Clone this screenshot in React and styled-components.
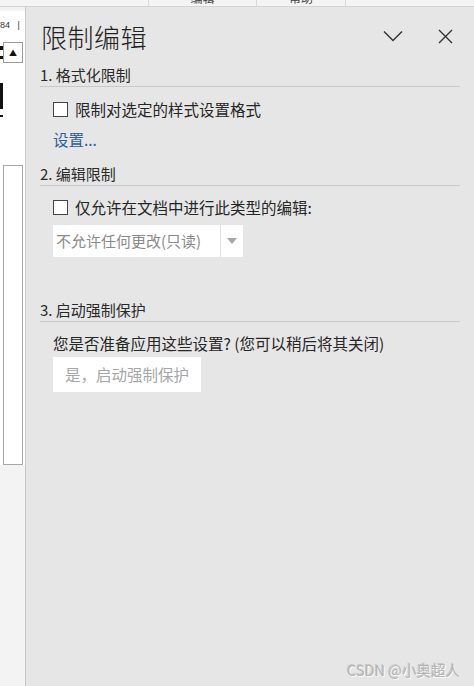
import React from 'react';
import styled, { createGlobalStyle } from 'styled-components';

const GlobalStyle = createGlobalStyle`
  html, body { margin: 0; padding: 0; }
  body {
    background: #e6e6e6;
    font-family: "Noto Sans CJK SC", "Noto Sans", sans-serif;
    color: #262626;
  }
`;

const Page = styled.div`
  position: relative;
  width: 474px;
  height: 686px;
  overflow: hidden;
  display: flex;
  flex-direction: column;
  background: #e6e6e6;
`;

const TopBar = styled.div`
  height: 6px;
  flex: none;
  display: flex;
  overflow: hidden;
  background: #f4f4f4;
  border-bottom: 1px solid #d4d4d4;
`;

const TopTab = styled.div`
  width: ${p => p.w}px;
  flex: none;
  border-right: 1px solid #d8d8d8;
  font-size: 12px;
  line-height: 12px;
  color: #444;
  text-align: center;
  margin-top: -8px;
`;

const Body = styled.div`
  flex: 1;
  display: flex;
  min-height: 0;
`;

const LeftStrip = styled.div`
  width: 25px;
  flex: none;
  display: flex;
  flex-direction: column;
  background: #f3f3f3;
  border-right: 1px solid #c8c8c8;
`;

const Ruler = styled.div`
  height: 31px;
  margin-top: 4px;
  background: #fff;
  font-family: "Liberation Sans", sans-serif;
  font-size: 9px;
  color: #333;
  padding: 9px 0 0 0;
  box-sizing: border-box;
  white-space: nowrap;
  overflow: hidden;
`;

const ScrollRow = styled.div`
  display: flex;
  flex: ${p => (p.grow ? 1 : 'none')};
  height: ${p => (p.h ? `${p.h}px` : 'auto')};
  background: ${p => p.bg || '#fff'};
`;

const DocEdge = styled.div`
  width: 3px;
  flex: none;
  display: flex;
  flex-direction: column;
  gap: 6px;
  padding-top: ${p => p.top || 0}px;
`;

const Mark = styled.div`
  width: 3px;
  height: ${p => p.h}px;
  background: #111;
`;

const ScrollBtn = styled.div`
  width: 20px;
  height: 21px;
  box-sizing: border-box;
  border: 1px solid #9a9a9a;
  background: #fff;
  display: flex;
  align-items: center;
  justify-content: center;
  font-size: 8px;
  color: #111;
`;

const Thumb = styled.div`
  width: 20px;
  height: 300px;
  box-sizing: border-box;
  border: 1px solid #a8a8a8;
  background: #fff;
`;

const Panel = styled.div`
  flex: 1;
  padding: 0 14px;
  display: flex;
  flex-direction: column;
`;

const Header = styled.div`
  height: 58px;
  display: flex;
  align-items: center;
`;

const Title = styled.div`
  flex: 1;
  font-size: 26px;
  font-weight: 300;
  padding-left: 1px;
  color: #222;
  letter-spacing: 0.5px;
`;

const IconBtn = styled.div`
  width: 30px;
  height: 30px;
  display: flex;
  align-items: center;
  justify-content: center;
  margin-left: ${p => p.ml || 0}px;
`;

const SectionHeading = styled.div`
  margin-top: ${p => p.mt}px;
  font-size: 15px;
  line-height: 20px;
  padding-bottom: 1px;
  border-bottom: 1px solid #c9c9c9;
  color: #2a2a2a;
`;

const Indent = styled.div`
  margin-left: 13px;
  margin-top: ${p => p.mt}px;
`;

const CheckRow = styled.label`
  display: flex;
  align-items: center;
  gap: 7px;
  height: 20px;
  font-size: 15.5px;
  color: #262626;
`;

const Box = styled.span`
  width: 15px;
  height: 15px;
  box-sizing: border-box;
  border: 1px solid #444;
  background: #fff;
  flex: none;
`;

const Link = styled.div`
  height: 20px;
  line-height: 20px;
  font-size: 15.5px;
  color: #2d5c9a;
`;

const Select = styled.div`
  width: 190px;
  height: 32px;
  display: flex;
  background: #fff;
`;

const SelectText = styled.div`
  flex: 1;
  padding-left: 3px;
  font-size: 15px;
  line-height: 32px;
  color: #8a8a8a;
  white-space: nowrap;
`;

const SelectArrow = styled.div`
  width: 22px;
  border-left: 1px solid #e2e2e2;
  display: flex;
  align-items: center;
  justify-content: center;
`;

const Text = styled.div`
  font-size: 15.5px;
  line-height: 20px;
  color: #262626;
  white-space: nowrap;
`;

const Button = styled.div`
  width: 148px;
  height: 35px;
  box-sizing: border-box;
  padding-left: 12px;
  background: #fff;
  font-size: 15.5px;
  line-height: 35px;
  color: #a6a6a6;
`;

const Watermark = styled.div`
  position: absolute;
  right: 14px;
  bottom: 6px;
  font-size: 14.5px;
  color: #b4b4b4;
  text-shadow: 1px 1px 0 #fafafa, -1px -1px 0 #c9c9c9;
  white-space: nowrap;
`;

const Chevron = () => (
  <svg width="20" height="12" viewBox="0 0 20 12">
    <polyline points="1,1.5 10,10.5 19,1.5" fill="none" stroke="#333" strokeWidth="1.4" />
  </svg>
);

const Close = () => (
  <svg width="15" height="15" viewBox="0 0 15 15">
    <path d="M1 1 L14 14 M14 1 L1 14" stroke="#333" strokeWidth="1.4" fill="none" />
  </svg>
);

const Caret = () => (
  <svg width="10" height="6" viewBox="0 0 10 6">
    <polygon points="0,0 10,0 5,6" fill="#a8a8a8" />
  </svg>
);

export default function App() {
  return (
    <Page>
      <GlobalStyle />
      <TopBar>
        <TopTab w={148}></TopTab>
        <TopTab w={107}>编辑</TopTab>
        <TopTab w={88}>帮助</TopTab>
      </TopBar>
      <Body>
        <LeftStrip>
          <Ruler>84 &nbsp;&nbsp;|</Ruler>
          <ScrollRow h={21}>
            <DocEdge top={4}>
              <Mark h={4} />
              <Mark h={3} />
            </DocEdge>
            <ScrollBtn>▲</ScrollBtn>
          </ScrollRow>
          <ScrollRow h={102}>
            <DocEdge top={20}>
              <Mark h={26} />
              <Mark h={2} />
            </DocEdge>
          </ScrollRow>
          <ScrollRow>
            <DocEdge />
            <Thumb />
          </ScrollRow>
          <ScrollRow grow bg="#f3f3f3" />
        </LeftStrip>
        <Panel>
          <Header>
            <Title>限制编辑</Title>
            <IconBtn><Chevron /></IconBtn>
            <IconBtn ml={22}><Close /></IconBtn>
          </Header>

          <SectionHeading mt={0}>1. 格式化限制</SectionHeading>
          <Indent mt={12}>
            <CheckRow><Box />限制对选定的样式设置格式</CheckRow>
          </Indent>
          <Indent mt={10}>
            <Link>设置...</Link>
          </Indent>

          <SectionHeading mt={15}>2. 编辑限制</SectionHeading>
          <Indent mt={11}>
            <CheckRow><Box />仅允许在文档中进行此类型的编辑:</CheckRow>
          </Indent>
          <Indent mt={8}>
            <Select>
              <SelectText>不允许任何更改(只读)</SelectText>
              <SelectArrow><Caret /></SelectArrow>
            </Select>
          </Indent>

          <SectionHeading mt={43}>3. 启动强制保护</SectionHeading>
          <Indent mt={11}>
            <Text>您是否准备应用这些设置? (您可以稍后将其关闭)</Text>
          </Indent>
          <Indent mt={4}>
            <Button>是，启动强制保护</Button>
          </Indent>
        </Panel>
      </Body>
      <Watermark>CSDN @小奥超人</Watermark>
    </Page>
  );
}
